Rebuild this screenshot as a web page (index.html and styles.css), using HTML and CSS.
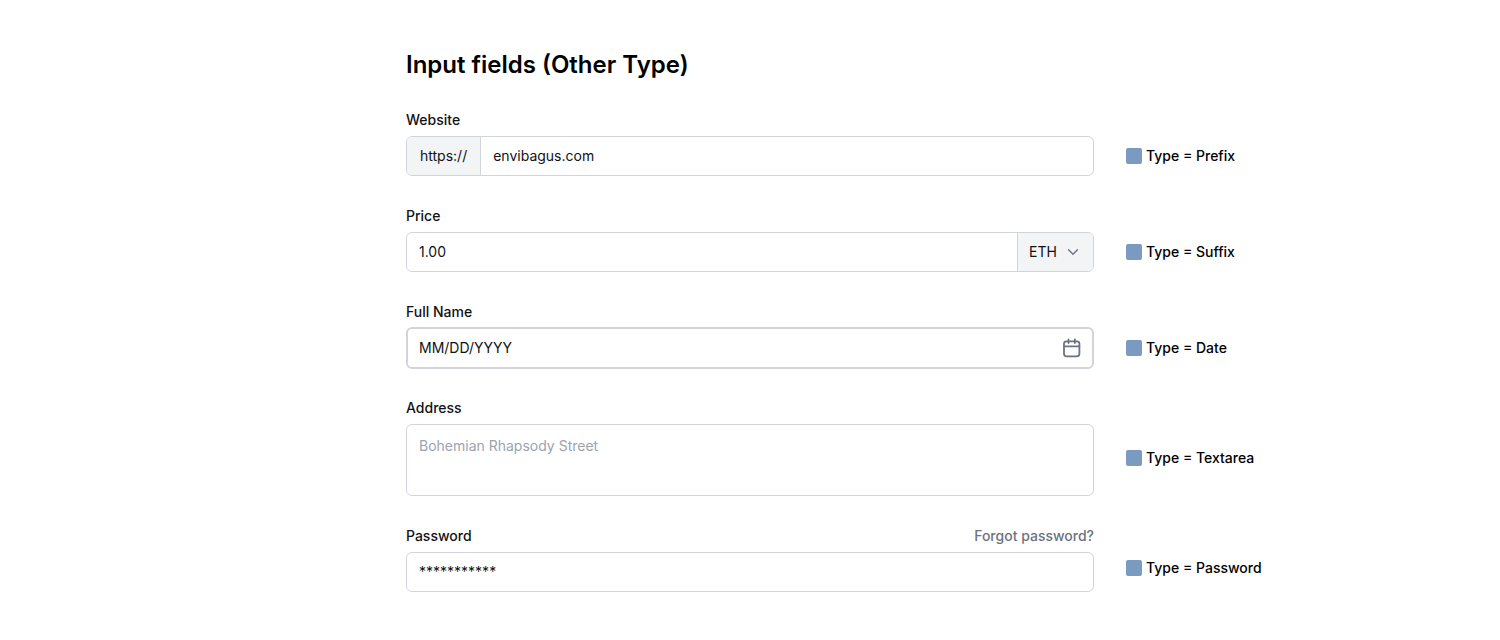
FILE: index.html
```html
<!DOCTYPE html>
<html lang="en">
<head>
<meta charset="utf-8">
<meta name="viewport" content="width=device-width, initial-scale=1">
<title>Input fields</title>
<link rel="stylesheet" href="styles.css">
</head>
<body>
<main class="page">
  <h1 class="title">Input fields (Other Type)</h1>
  <form class="form">
    <div class="row">
      <div class="label-row"><label for="website">Website</label></div>
      <div class="control">
        <span class="prefix">https://</span>
        <input class="input" id="website" type="text" value="envibagus.com">
      </div>
      <p class="note"><span class="swatch"></span>Type = Prefix</p>
    </div>
    <div class="row">
      <div class="label-row"><label for="price">Price</label></div>
      <div class="control">
        <input class="input" id="price" type="text" value="1.00">
        <div class="suffix">
          <select class="select" aria-label="Currency"><option>ETH</option></select>
          <svg class="chevron" viewBox="0 0 16 16" aria-hidden="true"><path d="M3.500 5.700 8 10.200l4.500-4.500"/></svg>
        </div>
      </div>
      <p class="note"><span class="swatch"></span>Type = Suffix</p>
    </div>
    <div class="row">
      <div class="label-row"><label for="date">Full Name</label></div>
      <div class="control control-active">
        <input class="input" id="date" type="text" value="MM/DD/YYYY">
        <svg class="calendar" viewBox="0 0 20 20" aria-hidden="true"><rect x="2" y="3.300" width="15.400" height="15" rx="2.500"/><path d="M2 8.400h15.400M6.500 1.400v3.600M12.900 1.400v3.600"/></svg>
      </div>
      <p class="note"><span class="swatch"></span>Type = Date</p>
    </div>
    <div class="row">
      <div class="label-row"><label for="address">Address</label></div>
      <div class="control">
        <textarea class="input textarea" id="address" rows="2" placeholder="Bohemian Rhapsody Street"></textarea>
      </div>
      <p class="note note-textarea"><span class="swatch"></span>Type = Textarea</p>
    </div>
    <div class="row">
      <div class="label-row"><label for="password">Password</label><a class="forgot" href="#">Forgot password?</a></div>
      <div class="control">
        <input class="input" id="password" type="text" value="***********">
      </div>
      <p class="note note-password"><span class="swatch"></span>Type = Password</p>
    </div>
  </form>
</main>
</body>
</html>
```
FILE: styles.css
```css
* {
  box-sizing: border-box;
}

body {
  margin: 0;
  background: #fff;
  color: #111214;
  font: 14px/20px Inter, "Liberation Sans", sans-serif;
}

.page {
  padding: 48px 0;
}

.title,
.row {
  display: grid;
  grid-template-columns: minmax(0, 1fr) minmax(0, 688px) minmax(0, 1fr);
  column-gap: 32px;
}

.title {
  margin: 0 0 28px;
  color: #000;
  font-size: 24px;
  font-weight: 600;
  line-height: 34px;
}

.title::before {
  content: "";
}

.form {
  display: flex;
  flex-direction: column;
  gap: 30px;
}

.row {
  row-gap: 6px;
  align-items: center;
}

.label-row {
  grid-column: 2;
  display: flex;
  justify-content: space-between;
  font-weight: 500;
}

.forgot {
  color: #6b7280;
  text-decoration: none;
}

.control {
  grid-column: 2;
  display: flex;
  align-items: stretch;
  min-height: 40px;
  overflow: hidden;
  border: 1px solid #d1d5db;
  border-radius: 6px;
}

.control-active {
  min-height: 42px;
  margin: -1px 0;
  align-items: center;
  padding-right: 10px;
  border-width: 2px;
}

.input {
  flex: 1;
  min-width: 0;
  padding: 0 12px;
  border: 0;
  outline: 0;
  background: transparent;
  color: inherit;
  font: inherit;
}

.control-active .input {
  padding-left: 11px;
}

.input::placeholder {
  color: #9ca3af;
  opacity: 1;
}

.textarea {
  padding: 11px 12px;
  height: 70px;
  resize: none;
}

.prefix,
.suffix {
  display: flex;
  align-items: center;
  background: #f3f4f6;
}

.prefix {
  padding: 0 13px;
  border-right: 1px solid #d1d5db;
}

.suffix {
  position: relative;
  width: 76px;
  border-left: 1px solid #d1d5db;
}

.select {
  width: 100%;
  height: 100%;
  padding: 0 11px;
  appearance: none;
  border: 0;
  outline: 0;
  background: transparent;
  color: inherit;
  font: inherit;
}

.chevron {
  position: absolute;
  right: 12px;
  width: 16px;
  height: 16px;
  pointer-events: none;
}

.chevron,
.calendar {
  fill: none;
  stroke: #6b7280;
  stroke-width: 1.4;
  stroke-linecap: round;
  stroke-linejoin: round;
}

.calendar {
  width: 20px;
  height: 20px;
  stroke-width: 1.8;
}

.note {
  grid-column: 3;
  display: flex;
  align-items: center;
  gap: 4px;
  margin: 0;
  color: #000;
  font-weight: 500;
}

.note-textarea {
  padding-bottom: 4px;
}

.note-password {
  padding-bottom: 8px;
}

.swatch {
  width: 16px;
  height: 16px;
  border-radius: 2px;
  background: #7b9abf;
}
```
